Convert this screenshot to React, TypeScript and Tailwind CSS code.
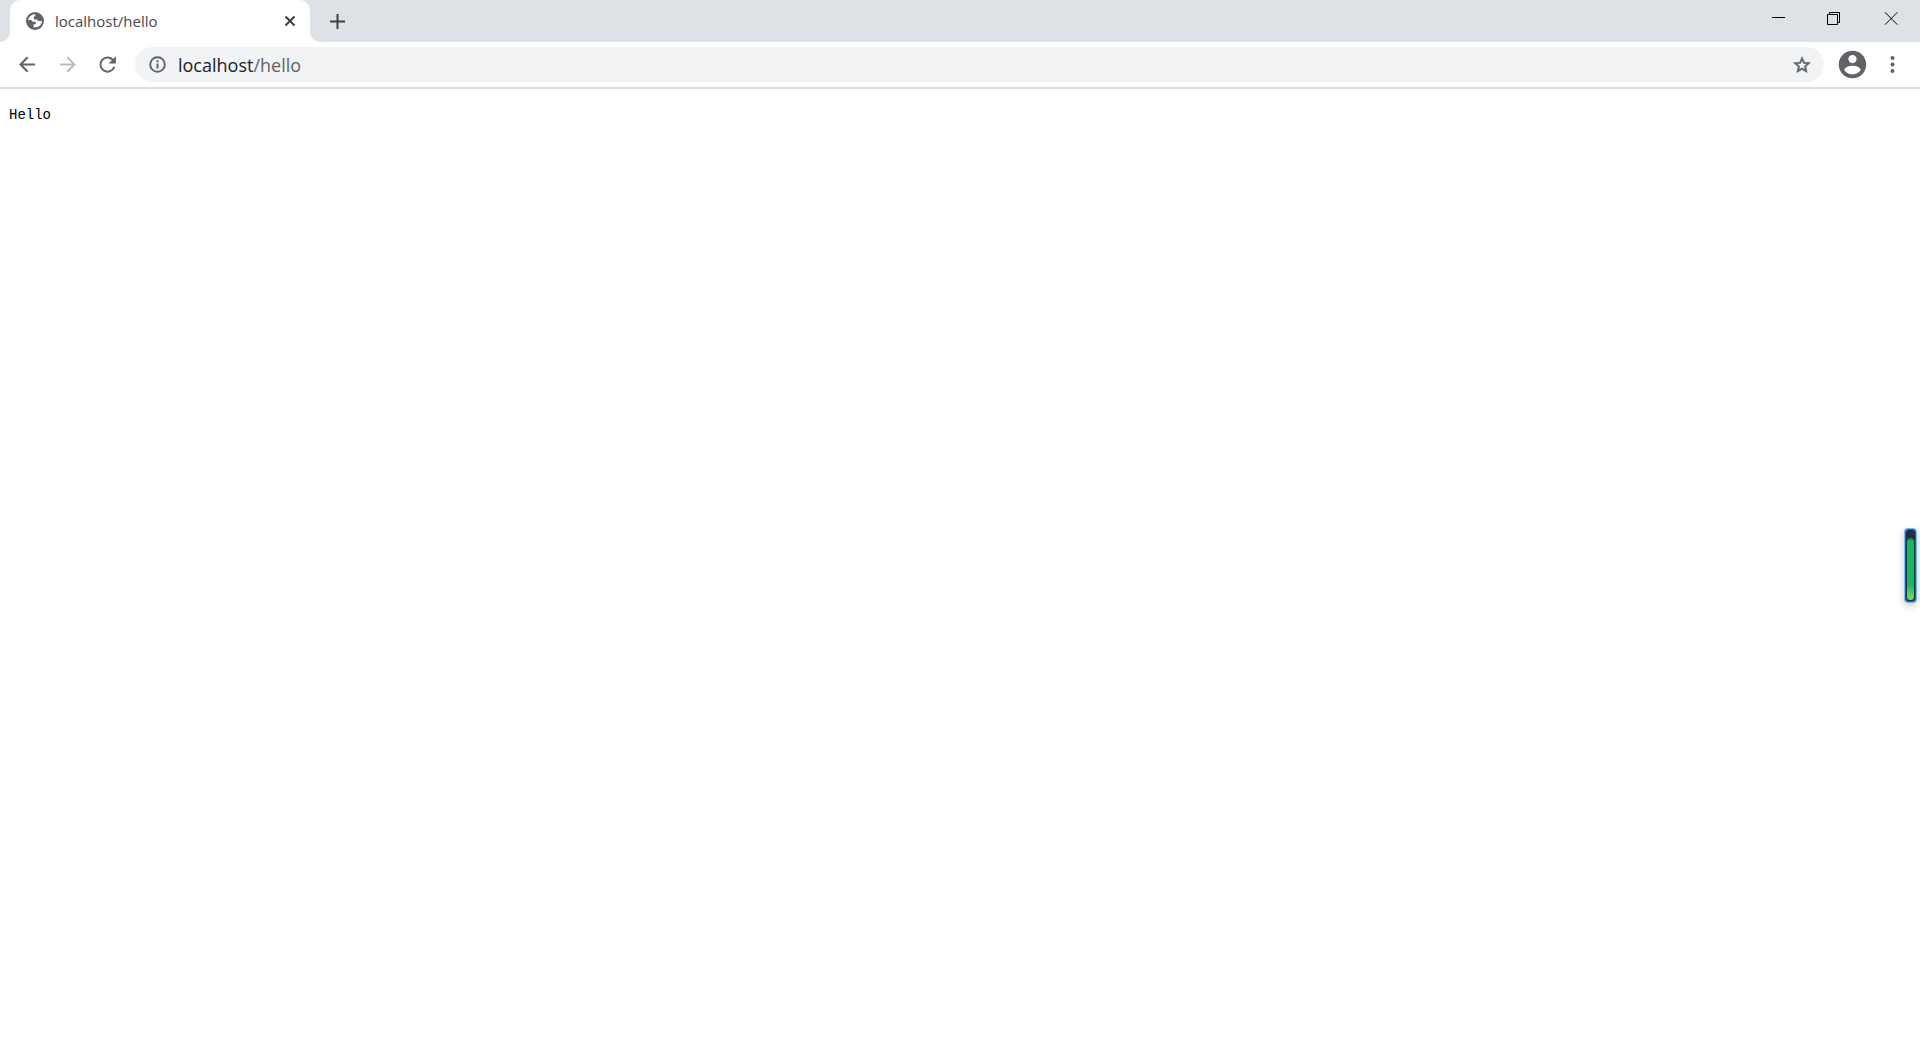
import type { ReactNode } from 'react';

interface IconButtonProps {
  label: string;
  className?: string;
  children: ReactNode;
}

const IconButton = ({ label, className = '', children }: IconButtonProps) => (
  <button
    type="button"
    aria-label={label}
    className={`flex shrink-0 items-center justify-center ${className}`}
  >
    {children}
  </button>
);

const GlobeIcon = () => (
  <svg width="20" height="20" viewBox="0 0 20 20" className="shrink-0">
    <circle cx="10" cy="10" r="9" fill="#5f6368" />
    <path
      d="M9.6 3c-3 .5-5.800 2.600-6.700 5.900h2.500c1.500 0 1.900.8 1.900 1.900h2.300c.8 0 1.200.6 1.200 1.300v1.200H8.600v2.900c3.900.7 8.200-1.800 8.400-6.300h-3.300c-.9 0-1.200-.7-1.200-1.500H8.900V6.500c0-.8.600-1.200 1.300-1.200V3.600z"
      fill="#fff"
    />
  </svg>
);

const TabStrip = () => (
  <header className="flex h-[42px] bg-[#dee1e6]">
    <svg width="10" height="10" viewBox="0 0 10 10" className="shrink-0 self-end" fill="#fff">
      <path d="M10 0v10H0A10 10 0 0 0 10 0z" />
    </svg>
    <div className="flex w-[300px] items-center rounded-t-[10px] bg-white pr-2.5 pl-[15px]">
      <GlobeIcon />
      <span className="ml-2.5 flex-1 truncate font-['Open_Sans',sans-serif] text-[15px] leading-5 text-[#45494d]">
        localhost/hello
      </span>
      <IconButton label="Close tab" className="size-5">
        <svg width="12" height="12" viewBox="0 0 12 12" stroke="#3c4043" strokeWidth="2">
          <path d="M1.500 1.500l9 9M10.500 1.500l-9 9" />
        </svg>
      </IconButton>
    </div>
    <svg width="10" height="10" viewBox="0 0 10 10" className="shrink-0 self-end" fill="#fff">
      <path d="M0 0v10h10A10 10 0 0 1 0 0z" />
    </svg>
    <IconButton label="New tab" className="w-[35px]">
      <svg width="15" height="15" viewBox="0 0 15 15" stroke="#3c4043" strokeWidth="2">
        <path d="M7.500 0v15M0 7.500h15" />
      </svg>
    </IconButton>

    {/* Window controls */}
    <div className="ml-auto flex h-[37px]">
      <IconButton label="Minimize" className="w-14">
        <svg width="13" height="13" viewBox="0 0 13 13" fill="#000">
          <path d="M0 5h13v1H0z" />
        </svg>
      </IconButton>
      <IconButton label="Restore" className="w-14">
        <svg width="14" height="13" viewBox="0 0 14 13" fill="none" stroke="#000">
          <path d="M.5 2.500h10v10H.5zM2.500 2.500v-2h10v10h-2" />
        </svg>
      </IconButton>
      <IconButton label="Close" className="w-[58px]">
        <svg width="14" height="13" viewBox="0 0 14 13" stroke="#000">
          <path d="M1 .3l12.400 12.400M13.400 .3L1 12.700" />
        </svg>
      </IconButton>
    </div>
  </header>
);

const Toolbar = () => (
  <nav className="flex items-center border-b-2 border-[#dadce0] py-[5px] pl-[7px]">
    <IconButton label="Back" className="h-[35px] w-10">
      <svg width="17" height="17" viewBox="0 0 17 17" fill="none" stroke="#5f6368" strokeWidth="2">
        <path d="M16 8.500H2M8.700 1.200L1.500 8.500l7.200 7.300" />
      </svg>
    </IconButton>
    <IconButton label="Forward" className="h-[35px] w-10">
      <svg width="17" height="17" viewBox="0 0 17 17" fill="none" stroke="#bbbdbf" strokeWidth="2">
        <path d="M1 8.500h14M8.300 1.200l7.200 7.300-7.200 7.300" />
      </svg>
    </IconButton>
    <IconButton label="Reload" className="h-[35px] w-10">
      <svg width="19" height="19" viewBox="0 0 19 19">
        <path d="M15.200 5.200A7.100 7.100 0 1 0 16.300 11.700" fill="none" stroke="#5f6368" strokeWidth="2" />
        <path d="M17.900 1.200v7.300h-7.300z" fill="#5f6368" />
      </svg>
    </IconButton>

    <form
      onSubmit={(e) => e.preventDefault()}
      className="ml-2 flex h-[35px] flex-1 items-center rounded-full bg-[#f1f3f4] pr-3 pl-3.5"
    >
      <IconButton label="View site information">
        <svg width="17" height="17" viewBox="0 0 17 17">
          <circle cx="8.500" cy="8.500" r="7.300" fill="none" stroke="#5f6368" strokeWidth="1.900" />
          <path d="M7.500 4.300h2v2h-2zM7.500 7.500h2v5h-2z" fill="#5f6368" />
        </svg>
      </IconButton>
      <a
        href="#"
        aria-label="Address"
        className="ml-3 flex-1 font-['Open_Sans',sans-serif] text-[18px] leading-6 text-[#5f6368]"
      >
        <span className="text-[#202124]">localhost</span>/hello
      </a>
      <IconButton label="Bookmark this page" className="size-5">
        <svg width="20" height="20" viewBox="0 0 24 24" fill="#5f6368" stroke="#5f6368" strokeWidth=".7" className="shrink-0">
          <path d="M22 9.240l-7.190-.62L12 2 9.190 8.630 2 9.240l5.460 4.730L5.820 21 12 17.270 18.180 21l-1.630-7.030L22 9.240zM12 15.400l-3.760 2.270 1-4.280-3.320-2.880 4.380-.38L12 6.100l1.710 4.040 4.380.38-3.320 2.880 1 4.280L12 15.400z" />
        </svg>
      </IconButton>
    </form>

    <IconButton label="Profile" className="ml-2 h-[35px] w-10">
      <svg width="33" height="33" viewBox="0 0 24 24" fill="#5f6368">
        <path d="M12 2C6.480 2 2 6.480 2 12s4.480 10 10 10 10-4.480 10-10S17.520 2 12 2zm0 3c1.660 0 3 1.340 3 3s-1.340 3-3 3-3-1.340-3-3 1.340-3 3-3zm0 14.200c-2.500 0-4.710-1.280-6-3.220.03-1.990 4-3.080 6-3.080 1.990 0 5.970 1.090 6 3.080-1.290 1.940-3.500 3.220-6 3.220z" />
      </svg>
    </IconButton>
    <IconButton label="Menu" className="mr-2 h-[35px] w-10">
      <svg width="5" height="17" viewBox="0 0 5 17" fill="#5f6368">
        <circle cx="2.500" cy="2" r="2" />
        <circle cx="2.500" cy="8.500" r="2" />
        <circle cx="2.500" cy="15" r="2" />
      </svg>
    </IconButton>
  </nav>
);

// Battery style widget that floats on the right edge of the screen
const ChargeWidget = () => (
  <div className="fixed top-[528px] right-[3px] flex h-[75px] w-[13px] flex-col rounded-sm border border-[#6cc3f7] bg-[#3f4bb5] p-px shadow-[0_3px_8px_rgba(0,0,0,0.2)]">
    <div className="flex flex-1 flex-col rounded-sm bg-[#272b3b] p-px">
      <div className="mt-[7px] flex-1 rounded-sm border-t-2 border-[#119450] bg-linear-to-b from-[#18b562] from-75% to-[#6fe05c]" />
    </div>
  </div>
);

export default function App() {
  return (
    <div className="min-h-screen bg-white">
      <TabStrip />
      <Toolbar />
      <main className="px-[9px] py-4">
        <pre className="font-['Liberation_Mono',monospace] text-[14px] leading-5 text-black">Hello</pre>
      </main>
      <ChargeWidget />
    </div>
  );
}
